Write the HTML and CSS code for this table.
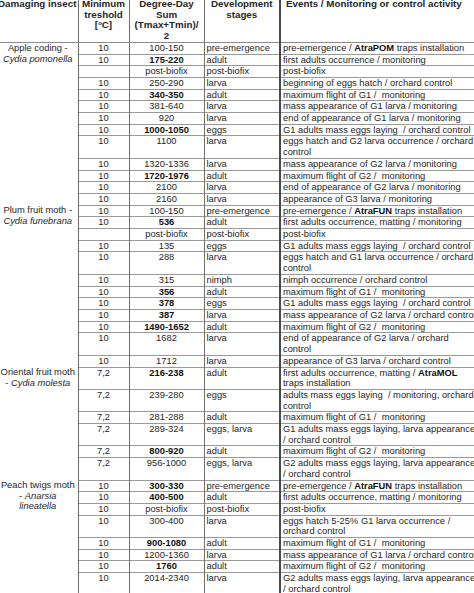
FILE: index.html
```html
<!DOCTYPE html>
<html lang="en">
<head>
<meta charset="utf-8">
<title>Degree-day table</title>
<link rel="stylesheet" href="styles.css">
</head>
<body>
<table class="dd">
  <colgroup>
    <col class="c-insect">
    <col class="c-min">
    <col class="c-sum">
    <col class="c-stage">
    <col class="c-event">
  </colgroup>
  <thead>
    <tr>
      <th class="insect">Damaging insect</th>
      <th class="num">Minimum<br>treshold<br>[<sup>o</sup>C]</th>
      <th class="num">Degree-Day<br>Sum<br>(Tmax+Tmin)/<br>2</th>
      <th class="num">Development<br>stages</th>
      <th class="event">Events / Monitoring or control activity</th>
    </tr>
  </thead>
  <tbody>
    <tr><td class="insect" rowspan="13">Apple coding -<br><i>Cydia pomonella</i></td><td class="num">10</td><td class="num">100-150</td><td class="stage">pre-emergence</td><td class="event">pre-emergence / <b>AtraPOM</b> traps installation</td></tr>
    <tr><td class="num">10</td><td class="num"><b>175-220</b></td><td class="stage">adult</td><td class="event">first adults occurrence / monitoring</td></tr>
    <tr><td class="num"></td><td class="num">post-biofix</td><td class="stage">post-biofix</td><td class="event">post-biofix</td></tr>
    <tr><td class="num">10</td><td class="num">250-290</td><td class="stage">larva</td><td class="event">beginning of eggs hatch / orchard control</td></tr>
    <tr><td class="num">10</td><td class="num"><b>340-350</b></td><td class="stage">adult</td><td class="event">maximum flight of G1 /&nbsp; monitoring</td></tr>
    <tr><td class="num">10</td><td class="num">381-640</td><td class="stage">larva</td><td class="event">mass appearance of G1 larva / monitoring</td></tr>
    <tr><td class="num">10</td><td class="num">920</td><td class="stage">larva</td><td class="event">end of appearance of G1 larva / monitoring</td></tr>
    <tr><td class="num">10</td><td class="num"><b>1000-1050</b></td><td class="stage">eggs</td><td class="event">G1 adults mass eggs laying&nbsp; / orchard control</td></tr>
    <tr><td class="num">10</td><td class="num">1100</td><td class="stage">larva</td><td class="event">eggs hatch and G2 larva occurrence / orchard<br>control</td></tr>
    <tr><td class="num">10</td><td class="num">1320-1336</td><td class="stage">larva</td><td class="event">mass appearance of G2 larva / monitoring</td></tr>
    <tr><td class="num">10</td><td class="num"><b>1720-1976</b></td><td class="stage">adult</td><td class="event">maximum flight of G2 /&nbsp; monitoring</td></tr>
    <tr><td class="num">10</td><td class="num">2100</td><td class="stage">larva</td><td class="event">end of appearance of G2 larva / monitoring</td></tr>
    <tr><td class="num">10</td><td class="num">2160</td><td class="stage">larva</td><td class="event">appearance of G3 larva / monitoring</td></tr>

    <tr><td class="insect" rowspan="12">Plum fruit moth -<br><i>Cydia funebrana</i></td><td class="num">10</td><td class="num">100-150</td><td class="stage">pre-emergence</td><td class="event">pre-emergence / <b>AtraFUN</b> traps installation</td></tr>
    <tr><td class="num">10</td><td class="num"><b>536</b></td><td class="stage">adult</td><td class="event">first adults occurrence, matting / monitoring</td></tr>
    <tr><td class="num"></td><td class="num">post-biofix</td><td class="stage">post-biofix</td><td class="event">post-biofix</td></tr>
    <tr><td class="num">10</td><td class="num">135</td><td class="stage">eggs</td><td class="event">G1 adults mass eggs laying&nbsp; / orchard control</td></tr>
    <tr><td class="num">10</td><td class="num">288</td><td class="stage">larva</td><td class="event">eggs hatch and G1 larva occurrence / orchard<br>control</td></tr>
    <tr><td class="num">10</td><td class="num">315</td><td class="stage">nimph</td><td class="event">nimph occurrence / orchard control</td></tr>
    <tr><td class="num">10</td><td class="num"><b>356</b></td><td class="stage">adult</td><td class="event">maximum flight of G1 /&nbsp; monitoring</td></tr>
    <tr><td class="num">10</td><td class="num"><b>378</b></td><td class="stage">eggs</td><td class="event">G1 adults mass eggs laying&nbsp; / orchard control</td></tr>
    <tr><td class="num">10</td><td class="num"><b>387</b></td><td class="stage">larva</td><td class="event">mass appearance of G2 larva / orchard control</td></tr>
    <tr><td class="num">10</td><td class="num"><b>1490-1652</b></td><td class="stage">adult</td><td class="event">maximum flight of G2 /&nbsp; monitoring</td></tr>
    <tr><td class="num">10</td><td class="num">1682</td><td class="stage">larva</td><td class="event">end of appearance of G2 larva / orchard<br>control</td></tr>
    <tr><td class="num">10</td><td class="num">1712</td><td class="stage">larva</td><td class="event">appearance of G3 larva / orchard control</td></tr>

    <tr><td class="insect" rowspan="6">Oriental fruit moth<br>- <i>Cydia molesta</i></td><td class="num">7,2</td><td class="num"><b>216-238</b></td><td class="stage">adult</td><td class="event">first adults occurrence, matting / <b>AtraMOL</b><br>traps installation</td></tr>
    <tr><td class="num">7,2</td><td class="num">239-280</td><td class="stage">eggs</td><td class="event">adults mass eggs laying&nbsp; / monitoring, orchard<br>control</td></tr>
    <tr><td class="num">7,2</td><td class="num">281-288</td><td class="stage">adult</td><td class="event">maximum flight of G1 /&nbsp; monitoring</td></tr>
    <tr><td class="num">7,2</td><td class="num">289-324</td><td class="stage">eggs, larva</td><td class="event">G1 adults mass eggs laying, larva appearance<br>/ orchard control</td></tr>
    <tr><td class="num">7,2</td><td class="num"><b>800-920</b></td><td class="stage">adult</td><td class="event">maximum flight of G2 /&nbsp; monitoring</td></tr>
    <tr><td class="num">7,2</td><td class="num">956-1000</td><td class="stage">eggs, larva</td><td class="event">G2 adults mass eggs laying, larva appearance<br>/ orchard control</td></tr>

    <tr><td class="insect" rowspan="8">Peach twigs moth<br>- <i>Anarsia</i><br><i>lineatella</i></td><td class="num">10</td><td class="num"><b>300-330</b></td><td class="stage">pre-emergence</td><td class="event">pre-emergence / <b>AtraFUN</b> traps installation</td></tr>
    <tr><td class="num">10</td><td class="num"><b>400-500</b></td><td class="stage">adult</td><td class="event">first adults occurrence, matting / monitoring</td></tr>
    <tr><td class="num">10</td><td class="num">post-biofix</td><td class="stage">post-biofix</td><td class="event">post-biofix</td></tr>
    <tr><td class="num">10</td><td class="num">300-400</td><td class="stage">larva</td><td class="event">eggs hatch 5-25% G1 larva occurrence /<br>orchard control</td></tr>
    <tr><td class="num">10</td><td class="num"><b>900-1080</b></td><td class="stage">adult</td><td class="event">maximum flight of G1 /&nbsp; monitoring</td></tr>
    <tr><td class="num">10</td><td class="num">1200-1360</td><td class="stage">larva</td><td class="event">mass appearance of G1 larva / orchard control</td></tr>
    <tr><td class="num">10</td><td class="num"><b>1760</b></td><td class="stage">adult</td><td class="event">maximum flight of G2 /&nbsp; monitoring</td></tr>
    <tr><td class="num">10</td><td class="num">2014-2340</td><td class="stage">larva</td><td class="event">G2 adults mass eggs laying, larva appearance<br>/ orchard control</td></tr>
  </tbody>
</table>
</body>
</html>
```
FILE: styles.css
```css
html, body {
  margin: 0;
  padding: 0;
  background: #ffffff;
}

body {
  font-family: "Liberation Sans", Arial, sans-serif;
  font-size: 9.35px;
  color: #262626;
  overflow: hidden;
}

.dd {
  border-collapse: collapse;
  table-layout: fixed;
  width: 500px;
  margin: -1px 0 0 -2px;
}

.c-insect { width: 80px; }
.c-min { width: 51px; }
.c-sum { width: 75px; }
.c-stage { width: 76px; }
.c-event { width: 218px; }

.dd th,
.dd td {
  padding: 0 2px;
  line-height: 10.7px;
  vertical-align: top;
  white-space: nowrap;
  overflow: hidden;
  font-weight: normal;
}

.dd th {
  font-size: 9.8px;
  font-weight: bold;
  text-align: center;
  padding-top: 0;
  padding-bottom: 0;
  border-bottom: 1px solid #8c8c8c;
}

.dd th sup {
  font-size: 6px;
  line-height: 0;
  vertical-align: 3px;
}

.dd th + th,
.dd td.num,
.dd td.stage,
.dd td.event {
  border-left: 1px solid #6e6e6e;
}

.dd th.event,
.dd td.event {
  border-left: 2px solid #4a4a4a;
  padding-left: 2px;
}

.dd th.event {
  text-align: left;
  padding-left: 5px;
}

.dd td.num,
.dd td.stage,
.dd td.event {
  border-top: 1px solid #9a9a9a;
}

.dd td.insect {
  text-align: center;
  border: none;
  padding: 0;
}

.dd th.insect {
  padding: 0;
  text-align: left;
}

.dd td.num {
  text-align: center;
}

.dd td.stage {
  text-align: left;
  padding-left: 2px;
}

.dd b {
  font-weight: bold;
  color: #111111;
}
```
